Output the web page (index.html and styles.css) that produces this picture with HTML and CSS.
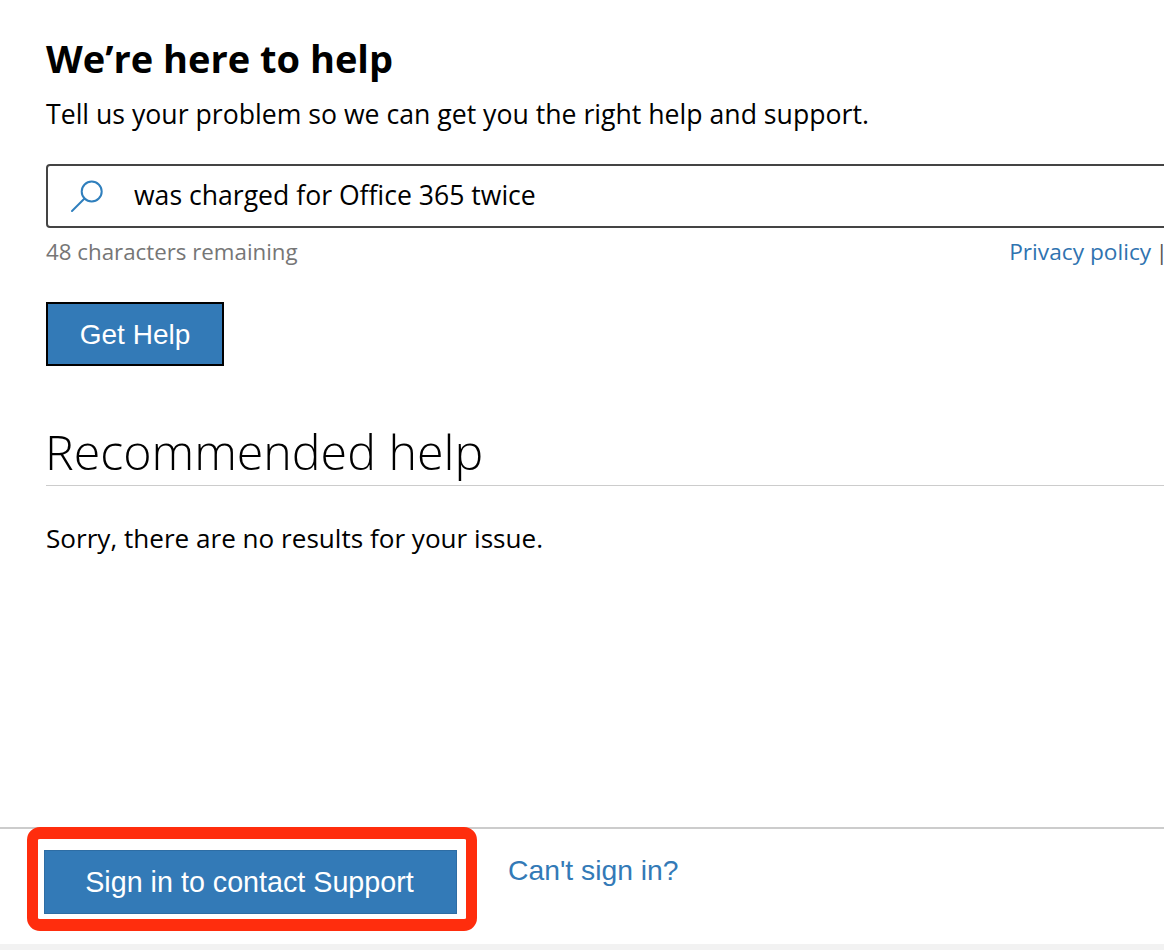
FILE: index.html
```html
<!DOCTYPE html>
<html lang="en">
<head>
<meta charset="utf-8">
<title>We're here to help</title>
<link rel="stylesheet" href="styles.css">
</head>
<body>
<div class="page">
  <main class="content">
    <h1 class="title">We’re here to help</h1>
    <p class="lead">Tell us your problem so we can get you the right help and support.</p>
    <div class="search">
      <svg class="search-icon" width="36" height="36" viewBox="0 0 36 36" aria-hidden="true">
        <circle cx="21.7" cy="13.5" r="10" fill="none" stroke="#2f7fbd" stroke-width="2"></circle>
        <path d="M14.5 20.5 L2 33" fill="none" stroke="#2f7fbd" stroke-width="2" stroke-linecap="round"></path>
      </svg>
      <span class="search-text">was charged for Office 365 twice</span>
    </div>
    <div class="meta">
      <span class="remaining">48 characters remaining</span>
      <span class="legal"><a class="link" href="#">Privacy policy</a> <span class="sep">|</span></span>
    </div>
    <button class="btn btn-help" type="button">Get Help</button>
    <h2 class="section">Recommended help</h2>
    <p class="empty">Sorry, there are no results for your issue.</p>
  </main>
  <footer class="footer">
    <button class="btn btn-signin" type="button">Sign in to contact Support</button>
    <a class="cant" href="#">Can't sign in?</a>
    <div class="highlight"></div>
  </footer>
  <div class="strip"></div>
</div>
</body>
</html>
```
FILE: styles.css
```css
* { box-sizing: border-box; }
html, body { margin: 0; height: 100%; background: #fff; }
.page {
  width: 1164px;
  height: 950px;
  overflow: hidden;
  display: flex;
  flex-direction: column;
  font-family: "Open Sans", "Noto Sans", sans-serif;
  color: #000;
}
.content {
  flex: 1;
  padding: 33px 0 0 46px;
}
.title {
  margin: 0;
  font-size: 38px;
  line-height: 50px;
  font-weight: 700;
}
.lead {
  margin: 13px 0 0;
  font-size: 26.65px;
  line-height: 36px;
}
.search {
  margin: 32px -20px 0 0;
  height: 64px;
  border: 2px solid #444;
  border-radius: 4px;
  display: flex;
  align-items: center;
  padding-left: 22px;
  gap: 28px;
}
.search-icon { flex: none; }
.search-text {
  font-size: 26.6px;
  line-height: 34px;
  padding-bottom: 3px;
}
.meta {
  display: flex;
  justify-content: space-between;
  align-items: center;
  height: 46px;
  font-size: 22.7px;
}
.remaining { color: #767676; font-size: 22.3px; }
.link { color: #2f73b0; text-decoration: none; }
.sep { color: #555; margin-left: -1.5px; letter-spacing: -4px; }
.btn {
  display: block;
  background: #337ab7;
  color: #fff;
  font-family: "Liberation Sans", Arial, sans-serif;
  cursor: pointer;
  border-radius: 0;
}
.btn-help {
  margin-top: 28px;
  width: 178px;
  height: 64px;
  border: 2px solid #000;
  font-size: 28px;
  padding-top: 3px;
}
.section {
  margin: 56px 0 0;
  height: 64px;
  font-size: 48.3px;
  line-height: 58px;
  font-weight: 300;
  text-indent: -1px;
  border-bottom: 1px solid #ccc;
}
.empty {
  margin: 34px 0 0;
  font-size: 26.1px;
  line-height: 36px;
}
.footer {
  position: relative;
  flex: none;
  height: 117px;
  border-top: 2px solid #ccc;
  padding: 21px 0 0 44px;
  display: flex;
  align-items: flex-start;
  gap: 52px;
}
.btn-signin {
  width: 413px;
  height: 64px;
  border: 1px solid #2e6da4;
  font-size: 28.7px;
  padding: 0 8px 0 6px;
}
.cant {
  color: #337ab7;
  font-family: "Liberation Sans", Arial, sans-serif;
  font-size: 28.3px;
  line-height: 40px;
  text-decoration: none;
  margin-left: -1px;
}
.highlight {
  position: absolute;
  left: 27px;
  top: -2px;
  width: 450px;
  height: 104px;
  border-style: solid;
  border-color: #ff2d0d;
  border-width: 12px 11px;
  border-radius: 13px;
}
.strip {
  flex: none;
  height: 6px;
  background: #f2f2f2;
}
```
